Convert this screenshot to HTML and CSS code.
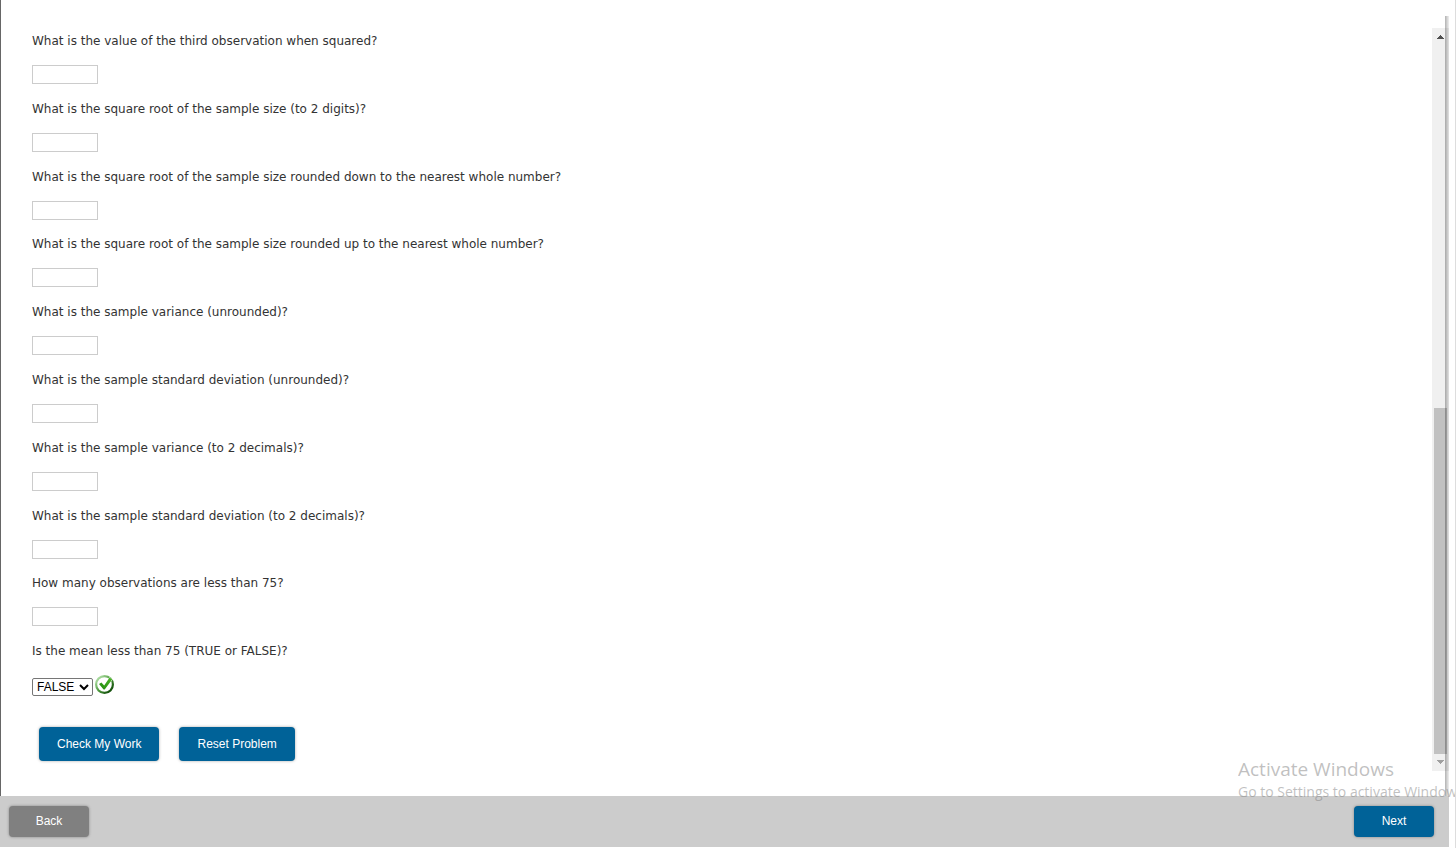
FILE: index.html
```html
<!DOCTYPE html>
<html lang="en">
<head>
    <meta charset="UTF-8">
    <meta name="viewport" content="width=device-width, initial-scale=1.0">
    <title>Sample Statistics</title>
    <link rel="stylesheet" href="styles.css">
</head>
<body>
    <main class="assignment">
        <form class="problem">
            <div class="questions">
                <div class="question">
                    <label for="q1">What is the value of the third observation when squared?</label>
                    <input type="text" id="q1" class="answer">
                </div>
                <div class="question">
                    <label for="q2">What is the square root of the sample size (to 2 digits)?</label>
                    <input type="text" id="q2" class="answer">
                </div>
                <div class="question">
                    <label for="q3">What is the square root of the sample size rounded down to the nearest whole number?</label>
                    <input type="text" id="q3" class="answer">
                </div>
                <div class="question">
                    <label for="q4">What is the square root of the sample size rounded up to the nearest whole number?</label>
                    <input type="text" id="q4" class="answer">
                </div>
                <div class="question">
                    <label for="q5">What is the sample variance (unrounded)?</label>
                    <input type="text" id="q5" class="answer">
                </div>
                <div class="question">
                    <label for="q6">What is the sample standard deviation (unrounded)?</label>
                    <input type="text" id="q6" class="answer">
                </div>
                <div class="question">
                    <label for="q7">What is the sample variance (to 2 decimals)?</label>
                    <input type="text" id="q7" class="answer">
                </div>
                <div class="question">
                    <label for="q8">What is the sample standard deviation (to 2 decimals)?</label>
                    <input type="text" id="q8" class="answer">
                </div>
                <div class="question">
                    <label for="q9">How many observations are less than 75?</label>
                    <input type="text" id="q9" class="answer">
                </div>
                <div class="question">
                    <label for="q10">Is the mean less than 75 (TRUE or FALSE)?</label>
                    <div class="choice">
                        <select id="q10" class="answer-select">
                            <option>TRUE</option>
                            <option selected>FALSE</option>
                        </select>
                        <svg class="correct" viewBox="0 0 20 20" aria-hidden="true">
                            <defs>
                                <linearGradient id="ring" x1="0" y1="0" x2="1" y2="1">
                                    <stop offset="0.15" stop-color="#a5d79a"/>
                                    <stop offset="0.5" stop-color="#4c9a3c"/>
                                    <stop offset="0.9" stop-color="#0f4a08"/>
                                </linearGradient>
                                <linearGradient id="tick" x1="0" y1="1" x2="1" y2="0">
                                    <stop offset="0" stop-color="#1f8a0c"/>
                                    <stop offset="1" stop-color="#4fb52a"/>
                                </linearGradient>
                            </defs>
                            <circle cx="9.5" cy="9.5" r="8.4" fill="#fff" stroke="url(#ring)" stroke-width="2.2"/>
                            <path d="M4 9 L6.400 7.600 L9.200 10.600 L14.600 2.600 L17.200 4.600 L9.700 14.400 L8.600 14.400 Z" fill="url(#tick)" stroke="#fff" stroke-width="1" stroke-linejoin="round" paint-order="stroke"/>
                        </svg>
                    </div>
                </div>
            </div>
            <div class="actions">
                <button type="button" class="btn">Check My Work</button>
                <button type="reset" class="btn">Reset Problem</button>
            </div>
        </form>
        <div class="scrollbar" aria-hidden="true">
            <svg class="arrow arrow-up" viewBox="0 0 17 17"><path d="M8 7h1v1h1v1h1v1h1v1H5v-1h1V9h1V8h1z"/></svg>
            <div class="track"></div>
            <div class="thumb"></div>
            <svg class="arrow arrow-down" viewBox="0 0 17 17"><path d="M5 6h7v1h-1v1h-1v1H9v1H8V9H7V8H6V7H5z"/></svg>
        </div>
        <div class="edge"></div>
    </main>

    <footer class="nav">
        <button type="button" class="btn btn-nav btn-back">Back</button>
        <button type="button" class="btn btn-nav">Next</button>
    </footer>

    <div class="watermark">
        <p class="watermark-title">Activate Windows</p>
        <p class="watermark-text">Go to Settings to activate Windows.</p>
    </div>
</body>
</html>
```
FILE: styles.css
```css
* {
    margin: 0;
    padding: 0;
    box-sizing: border-box;
}

body {
    position: relative;
    display: flex;
    flex-direction: column;
    min-height: 100vh;
    padding-bottom: 1px;
    font-family: Verdana, "DejaVu Sans", sans-serif;
    font-size: 12px;
    color: #333;
    background: #fff;
    border-right: 1px solid #ddd;
    overflow: hidden;
}

.assignment {
    position: relative;
    flex: 1;
    display: flex;
    margin-right: 6px;
    border-left: 1px solid #666;
}

.problem {
    flex: 1;
    display: flex;
    flex-direction: column;
    padding: 33px 31px 35px;
}

.questions {
    flex: 1;
    display: grid;
    grid-auto-rows: 1fr;
}

.question {
    display: flex;
    flex-direction: column;
    align-items: flex-start;
    gap: 15px;
    line-height: 17px;
}

.answer {
    width: 66px;
    height: 19px;
    border: 1px solid #ccc;
    background: #fff;
}

.choice {
    display: flex;
    align-items: flex-end;
    gap: 2px;
}

.answer-select {
    width: 61px;
    height: 18px;
    font-family: Arial, "Liberation Sans", sans-serif;
    font-size: 12px;
    color: #000;
    background: #fff;
    border: 1px solid #767676;
    border-radius: 2px;
}

.correct {
    width: 20px;
    height: 20px;
    margin-bottom: 1px;
}

.actions {
    display: flex;
    gap: 20px;
    margin-top: 16px;
    padding-left: 7px;
}

.btn {
    height: 34px;
    padding: 0 18px;
    font-family: Arial, "Liberation Sans", sans-serif;
    font-size: 12px;
    color: #fff;
    background: #006298;
    border: 0;
    border-radius: 4px;
    box-shadow: 0 0 3px rgba(0, 0, 0, 0.35);
    cursor: pointer;
}

/* scroll rail */
.scrollbar {
    display: flex;
    flex-direction: column;
    width: 17px;
    margin: 28px 0 25px;
    background: #f0f0f0;
}

.arrow {
    width: 17px;
    height: 17px;
}

.arrow-up {
    fill: #505050;
}

.arrow-down {
    fill: #a0a0a0;
}

.track {
    flex: 363;
}

.thumb {
    flex: 346;
    margin: 0 2px;
    background: #c1c1c1;
}

/* shadow of the panel edge, runs over the scroll rail */
.edge {
    position: absolute;
    top: 16px;
    right: 0;
    bottom: 0;
    width: 4px;
    background: linear-gradient(to right, rgba(0, 0, 0, 0.3), rgba(0, 0, 0, 0.06));
}

.nav {
    display: flex;
    justify-content: space-between;
    align-items: flex-start;
    height: 51px;
    margin-right: 6px;
    padding: 10px 15px 10px 9px;
    background: #ccc;
}

.btn-nav {
    width: 80px;
    height: 31px;
    padding-bottom: 2px;
}

.btn-back {
    background: #808080;
}

.watermark {
    position: absolute;
    right: 0;
    bottom: 45px;
    width: 217px;
    overflow: hidden;
    white-space: nowrap;
    font-family: "Segoe UI", "Open Sans", sans-serif;
    color: rgba(130, 130, 130, 0.5);
    pointer-events: none;
}

.watermark-title {
    font-size: 19px;
    line-height: 24px;
}

.watermark-text {
    font-size: 14px;
    line-height: 22px;
}
```
